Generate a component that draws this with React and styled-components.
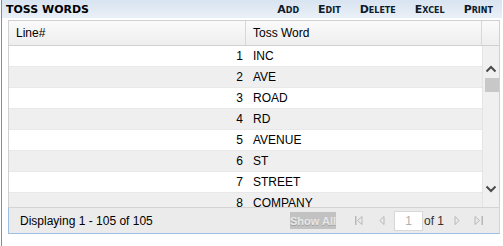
import styled, { createGlobalStyle } from "styled-components";

const GlobalStyle = createGlobalStyle`
  body {
    margin: 0;
    background: #ffffff;
    font-family: "Liberation Sans", Arial, sans-serif;
  }
`;

const words = ["INC", "AVE", "ROAD", "RD", "AVENUE", "ST", "STREET", "COMPANY"];
const actions = ["Add", "Edit", "Delete", "Excel", "Print"];

const TossWords = () => {
  return (
    <Panel>
      <TitleBar>
        <Title>TOSS WORDS</Title>
        <Actions>
          {actions.map((a) => (
            <ActionLink key={a}>{a}</ActionLink>
          ))}
        </Actions>
      </TitleBar>
      <Grid>
        <HeaderRow>
          <HeaderCell $width="237px">Line#</HeaderCell>
          <HeaderCell $width="236px">Toss Word</HeaderCell>
          <ScrollHeader />
        </HeaderRow>
        <Body>
          <Rows>
            {words.map((w, i) => (
              <Row key={w} $alt={i % 2 === 1}>
                <NumCell>{i + 1}</NumCell>
                <WordCell>{w}</WordCell>
              </Row>
            ))}
          </Rows>
          <ScrollBar>
            <ScrollArrow>
              <svg width="12" height="8" viewBox="0 0 12 8">
                <path d="M1.5 6.5 L6 2 L10.5 6.5" fill="none" stroke="#4a4a4a" strokeWidth="2" />
              </svg>
            </ScrollArrow>
            <Thumb />
            <ScrollSpacer />
            <ScrollArrow>
              <svg width="12" height="8" viewBox="0 0 12 8">
                <path d="M1.5 1.5 L6 6 L10.5 1.5" fill="none" stroke="#4a4a4a" strokeWidth="2" />
              </svg>
            </ScrollArrow>
          </ScrollBar>
        </Body>
        <Footer>
          <Status>Displaying 1 - 105 of 105</Status>
          <Pager>
            <ShowAll>Show All</ShowAll>
            <PagerIcon $gap="19px">
              <svg width="8" height="9" viewBox="0 0 8 9">
                <rect x="0" y="0" width="1.5" height="9" fill="#b8b8b8" />
                <path d="M7 0.5 L2.5 4.5 L7 8.5 Z" fill="none" stroke="#b8b8b8" strokeWidth="1" />
              </svg>
            </PagerIcon>
            <PagerIcon $gap="16px">
              <svg width="6" height="9" viewBox="0 0 6 9">
                <path d="M5 0.5 L0.8 4.5 L5 8.5 Z" fill="none" stroke="#b8b8b8" strokeWidth="1" />
              </svg>
            </PagerIcon>
            <PageInput>1</PageInput>
            <OfText>of 1</OfText>
            <PagerIcon $gap="10px">
              <svg width="6" height="9" viewBox="0 0 6 9">
                <path d="M1 0.5 L5.2 4.5 L1 8.5 Z" fill="none" stroke="#b8b8b8" strokeWidth="1" />
              </svg>
            </PagerIcon>
            <PagerIcon $gap="14px">
              <svg width="10" height="9" viewBox="0 0 10 9">
                <path d="M1 0.5 L5.5 4.5 L1 8.5 Z" fill="none" stroke="#b8b8b8" strokeWidth="1" />
                <rect x="7.5" y="0" width="1.5" height="9" fill="#b8b8b8" />
              </svg>
            </PagerIcon>
          </Pager>
        </Footer>
      </Grid>
    </Panel>
  );
};

const App = () => (
  <>
    <GlobalStyle />
    <TossWords />
  </>
);

const Panel = styled.div`
  width: 501px;
  height: 246px;
  margin-left: 1px;
  border-left: 1px solid #7d8ea3;
  box-sizing: border-box;
`;

const TitleBar = styled.div`
  height: 18px;
  display: flex;
  align-items: center;
  justify-content: space-between;
  padding: 0 9px 0 4px;
  background: linear-gradient(#d8e4f1, #eaf0f7);
  box-sizing: border-box;
`;

const Title = styled.div`
  font-family: "DejaVu Sans", Verdana, sans-serif;
  font-weight: bold;
  font-size: 11px;
  color: #000;
  padding-top: 1px;
`;

const Actions = styled.div`
  display: flex;
  gap: 19px;
`;

const ActionLink = styled.span`
  font-family: "DejaVu Sans", Verdana, sans-serif;
  font-weight: bold;
  font-size: 11px;
  font-variant: small-caps;
  color: #0d1b2a;
  padding-top: 1px;
`;

const Grid = styled.div`
  margin: 2px 0 0 6px;
  width: 492px;
  border: 1px solid #d0d0d0;
  border-bottom: none;
  box-sizing: border-box;
`;

const HeaderRow = styled.div`
  display: flex;
  height: 25px;
  background: linear-gradient(#fafafa, #eeeeee);
  border-bottom: 1px solid #d0d0d0;
  box-sizing: border-box;
`;

const HeaderCell = styled.div`
  width: ${(p) => p.$width};
  display: flex;
  align-items: center;
  padding-left: 7px;
  font-size: 12px;
  color: #000;
  border-right: 1px solid #d8d8d8;
  box-sizing: border-box;
`;

const ScrollHeader = styled.div`
  flex: 1;
`;

const Body = styled.div`
  display: flex;
  height: 161px;
  overflow: hidden;
`;

const Rows = styled.div`
  width: 473px;
  overflow: hidden;
`;

const Row = styled.div`
  display: flex;
  flex-shrink: 0;
  height: 21px;
  align-items: center;
  background: ${(p) => (p.$alt ? "#efeff0" : "#ffffff")};
  border-bottom: 1px solid #e8e8e8;
  box-sizing: border-box;
  font-size: 12px;
  color: #000;
`;

const NumCell = styled.div`
  width: 237px;
  text-align: right;
  padding-right: 3px;
  box-sizing: border-box;
`;

const WordCell = styled.div`
  padding-left: 7px;
`;

const ScrollBar = styled.div`
  flex: 1;
  display: flex;
  flex-direction: column;
  align-items: center;
  background: #f0f0f0;
  border-left: 1px solid #e4e4e4;
  padding-top: 17px;
  box-sizing: border-box;
`;

const ScrollArrow = styled.div`
  height: 12px;
  display: flex;
  align-items: center;
  justify-content: center;
`;

const Thumb = styled.div`
  margin-top: 3px;
  width: 14px;
  height: 14px;
  background: #c8c8c8;
  align-self: flex-end;
`;

const ScrollSpacer = styled.div`
  height: 91px;
`;

const Footer = styled.div`
  height: 27px;
  display: flex;
  align-items: center;
  justify-content: space-between;
  background: #ebebeb;
  border-top: 1px solid #d4d4d4;
  border-left: 1px solid #9ebde6;
  border-bottom: 1px solid #9ebde6;
  border-right: 1px solid #c8d8ee;
  margin: 0 -1px 0 -1px;
  padding: 0 15px 0 11px;
  box-sizing: border-box;
`;

const Status = styled.div`
  font-size: 12px;
  color: #000;
`;

const Pager = styled.div`
  display: flex;
  align-items: center;
`;

const ShowAll = styled.div`
  width: 46px;
  height: 17px;
  display: flex;
  align-items: center;
  justify-content: center;
  white-space: nowrap;
  background: #c2c2c2;
  color: #e8e8e8;
  font-size: 11px;
  font-weight: bold;
  text-shadow: 0 1px 0 #a0a0a0;
`;

const PagerIcon = styled.div`
  margin-left: ${(p) => p.$gap};
  display: flex;
  align-items: center;
`;

const PageInput = styled.div`
  margin-left: 9px;
  width: 29px;
  height: 20px;
  box-sizing: border-box;
  border: 1px solid #d8d8d8;
  background: #ffffff;
  display: flex;
  align-items: center;
  justify-content: center;
  font-size: 12px;
  color: #b0b0b0;
`;

const OfText = styled.div`
  margin-left: 1px;
  font-size: 12px;
  color: #333;
`;

export default App;
